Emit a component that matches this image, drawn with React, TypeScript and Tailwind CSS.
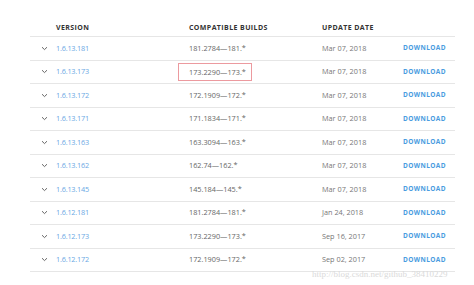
import React from 'react';

type Row = { version: string; builds: string; date: string };

const rows: Row[] = [
  { version: '1.6.13.181', builds: '181.2784—181.*', date: 'Mar 07, 2018' },
  { version: '1.6.13.173', builds: '173.2290—173.*', date: 'Mar 07, 2018' },
  { version: '1.6.13.172', builds: '172.1909—172.*', date: 'Mar 07, 2018' },
  { version: '1.6.13.171', builds: '171.1834—171.*', date: 'Mar 07, 2018' },
  { version: '1.6.13.163', builds: '163.3094—163.*', date: 'Mar 07, 2018' },
  { version: '1.6.13.162', builds: '162.74—162.*', date: 'Mar 07, 2018' },
  { version: '1.6.13.145', builds: '145.184—145.*', date: 'Mar 07, 2018' },
  { version: '1.6.12.181', builds: '181.2784—181.*', date: 'Jan 24, 2018' },
  { version: '1.6.12.173', builds: '173.2290—173.*', date: 'Sep 16, 2017' },
  { version: '1.6.12.172', builds: '172.1909—172.*', date: 'Sep 02, 2017' },
];

const Chevron = () => (
  <svg width="7" height="5" viewBox="0 0 7 5" className="text-[#666]">
    <polyline points="1,1.2 3.5,3.6 6,1.2" fill="none" stroke="currentColor" strokeWidth="1" />
  </svg>
);

const cols = 'grid grid-cols-[26px_133px_133px_81px_52px]';

export default function App() {
  return (
    <div className="w-[474px] h-[285px] bg-white relative overflow-hidden font-['Open_Sans',sans-serif]">
      <div className="ml-[30px] w-[425px]">
        <div className={`${cols} h-[37px] items-end pb-[3px] border-b border-[#e6e6e6] text-[7px] leading-[10px] font-bold tracking-[0.4px] text-[#333]`}>
          <div />
          <div>VERSION</div>
          <div>COMPATIBLE BUILDS</div>
          <div>UPDATE DATE</div>
          <div />
        </div>
        {rows.map((r, i) => (
          <div key={r.version} className={`${cols} h-[23.5px] items-center border-b border-[#e6e6e6] text-[7.3px]`}>
            <div className="flex justify-center pl-[2px]">
              <Chevron />
            </div>
            <div className="text-[#6aa8e4] tracking-[-0.2px]">{r.version}</div>
            <div className="text-[#666]">
              {i === 1 ? (
                <span className="inline-block -ml-[11px] w-[74px] h-[18px] leading-[16px] pl-[10px] border border-[#ec9a9f]">{r.builds}</span>
              ) : (
                r.builds
              )}
            </div>
            <div className="text-[#777]">{r.date}</div>
            <div className="text-[#4a9ce0] font-bold text-[6.5px] tracking-[0.4px]">DOWNLOAD</div>
          </div>
        ))}
      </div>
      <div className="absolute left-[312px] top-[268px] text-[9px] text-[#dadada] font-['Liberation_Serif',serif]">
        http://blog.csdn.net/github_38410229
      </div>
    </div>
  );
}
